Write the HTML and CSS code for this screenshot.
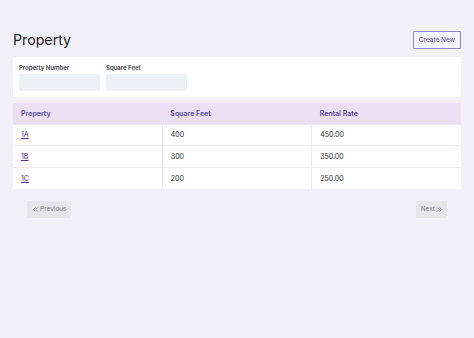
FILE: index.html
```html
<!DOCTYPE html>
<html lang="en">
<head>
    <meta charset="UTF-8">
    <meta name="viewport" content="width=device-width, initial-scale=1.0">
    <title>Property</title>
    <link rel="stylesheet" href="styles.css">
</head>
<body>
    <div class="page">
        <div class="page-header">
            <h1>Property</h1>
            <a href="#" class="btn-create">Create New</a>
        </div>

        <form class="filters">
            <div class="field">
                <label for="number">Property Number</label>
                <input type="text" id="number">
            </div>
            <div class="field">
                <label for="sqft">Square Feet</label>
                <input type="text" id="sqft">
            </div>
        </form>

        <table class="list">
            <thead>
                <tr>
                    <th>Property</th>
                    <th>Square Feet</th>
                    <th>Rental Rate</th>
                </tr>
            </thead>
            <tbody>
                <tr>
                    <td><a href="#">1A</a></td>
                    <td>400</td>
                    <td>450.00</td>
                </tr>
                <tr>
                    <td><a href="#">1B</a></td>
                    <td>300</td>
                    <td>350.00</td>
                </tr>
                <tr>
                    <td><a href="#">1C</a></td>
                    <td>200</td>
                    <td>250.00</td>
                </tr>
            </tbody>
        </table>

        <div class="pager">
            <a href="#" class="pager-btn">
                <svg viewBox="0 0 10 10" width="7" height="7"><path d="M5 2 2 5l3 3M8.5 2l-3 3 3 3" fill="none" stroke="currentColor" stroke-width="1"/></svg>
                Previous
            </a>
            <a href="#" class="pager-btn">
                Next
                <svg viewBox="0 0 10 10" width="7" height="7"><path d="M1.5 2l3 3-3 3M5 2l3 3-3 3" fill="none" stroke="currentColor" stroke-width="1"/></svg>
            </a>
        </div>
    </div>
</body>
</html>
```

FILE: styles.css
```css
* {
    box-sizing: border-box;
    margin: 0;
    padding: 0;
    font-family: Inter, "Noto Sans", sans-serif;
}

body {
    background: #f1f0f9;
    color: #1c1b22;
}

.page {
    padding: 0 13px;
}

.page-header {
    display: flex;
    justify-content: space-between;
    align-items: flex-start;
    padding-top: 31px;
    height: 57px;
}

h1 {
    font-size: 14.2px;
    font-weight: 400;
    line-height: 18px;
}

.btn-create {
    display: block;
    padding: 0 5px;
    height: 18px;
    line-height: 16px;
    font-size: 6.5px;
    color: #5a4a9c;
    text-decoration: none;
    border: 1px solid #8d80c4;
    border-radius: 1px;
    background: #f5f4fb;
}

.filters {
    display: flex;
    gap: 6px;
    background: #fff;
    border-radius: 2px;
    padding: 7px 6px 6px;
    height: 40px;
}

.field label {
    display: block;
    font-size: 6px;
    font-weight: 600;
    color: #3b3b45;
    line-height: 7px;
    margin-bottom: 3px;
}

.field input {
    display: block;
    width: 81px;
    height: 17px;
    border: none;
    border-radius: 2px;
    background: #edf0f5;
}

.list {
    width: 100%;
    margin-top: 6px;
    border-collapse: collapse;
    background: #fff;
    font-size: 7px;
    table-layout: fixed;
}

.list th {
    background: #eddff3;
    color: #5a4aa0;
    font-weight: 600;
    text-align: left;
    height: 21px;
    padding: 0 8px;
}

.list td {
    height: 21.5px;
    padding: 0 8px;
    border-top: 1px solid #ebe9f1;
    border-right: 1px solid #ebe9f1;
    color: #2a2a30;
}

.list td:last-child {
    border-right: none;
}

.list td a {
    color: #4b2a86;
}

.pager {
    display: flex;
    justify-content: space-between;
    padding: 12px 14px 0;
}

.pager-btn {
    display: flex;
    align-items: center;
    gap: 1px;
    height: 17px;
    padding: 0 4px 0 5px;
    font-size: 6.5px;
    color: #808088;
    text-decoration: none;
    background: #e6e6ea;
    border-radius: 1px;
}
```
